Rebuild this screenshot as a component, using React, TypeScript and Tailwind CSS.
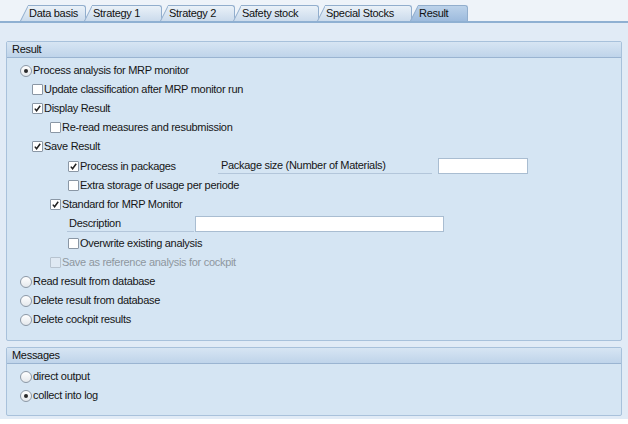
import React from 'react';

interface TabItem {
  label: string;
  body: string;
  active?: boolean;
}

const tabs: TabItem[] = [
  { label: 'Data basis', body: 'w-[58px]' },
  { label: 'Strategy 1', body: 'w-[70px]' },
  { label: 'Strategy 2', body: 'w-[67px]' },
  { label: 'Safety stock', body: 'w-[78px]' },
  { label: 'Special Stocks', body: 'w-[87px]' },
  { label: 'Result', body: 'w-[50px]', active: true },
];

const Tab: React.FC<TabItem> = ({ label, body, active }) => {
  const grad = active ? 'tabOn' : 'tabOff';
  return (
    <div className="flex h-[16px] items-end -ml-[2px] first:ml-0">
      <svg width="9" height="16" viewBox="0 0 9 16" className="shrink-0 -mr-px">
        <path d="M0 16 L8 0.5 L9 0.5 L9 16 Z" fill={`url(#${grad})`} />
        <path d="M0.5 16 L8.3 0.5" stroke="#92aecd" strokeWidth="1" fill="none" />
      </svg>
      <div
        className={`${body} h-[16px] border-t border-r border-[#92aecd] rounded-tr-[3px] pl-[1px] leading-[15px] text-[#111] ${
          active ? 'bg-gradient-to-b from-[#bcd2ea] to-[#9dbbdd]' : 'bg-gradient-to-b from-[#eaf1f8] to-[#cbdbec]'
        }`}
      >
        {label}
      </div>
    </div>
  );
};

const Check: React.FC<{ checked?: boolean; disabled?: boolean }> = ({ checked, disabled }) => (
  <span
    className={`w-[11px] h-[11px] shrink-0 rounded-[1px] border flex items-center justify-center ${
      disabled ? 'border-[#b7c3cf] bg-[#dfe9f3]' : 'border-[#8a97a5] bg-white'
    }`}
  >
    {checked && (
      <svg width="9" height="9" viewBox="0 0 9 9">
        <path d="M1.8 4.6 L3.6 6.8 L7.2 1.8" stroke="#222" strokeWidth="1.5" fill="none" />
      </svg>
    )}
  </span>
);

const Radio: React.FC<{ checked?: boolean }> = ({ checked }) => (
  <span className="w-[12px] h-[12px] shrink-0 rounded-full border border-[#8c98a5] bg-gradient-to-b from-white to-[#e4e8ec] flex items-center justify-center">
    {checked && <span className="w-[4px] h-[4px] rounded-full bg-[#2a2a2a]" />}
  </span>
);

const Row: React.FC<{ pad: string; children: React.ReactNode; tall?: boolean }> = ({ pad, children, tall }) => (
  <div className={`flex items-center gap-[1px] ${tall ? 'h-[20px]' : 'h-[19px]'} ${pad}`}>{children}</div>
);

const Group: React.FC<{ title: string; children: React.ReactNode; className?: string }> = ({ title, children, className }) => (
  <div className={`rounded-[2px] border border-[#a8c1db] bg-[#d5e5f3] ${className ?? ''}`}>
    <div className="h-[16px] border-b border-[#9ab4d1] bg-gradient-to-b from-[#d7e5f3] to-[#bfd4ea] pl-[5px] leading-[15px] text-[#111]">
      {title}
    </div>
    {children}
  </div>
);

export default function App() {
  return (
    <div className="w-[628px] h-[424px] overflow-hidden bg-white font-['Liberation_Sans',Arial,sans-serif] text-[11px] tracking-[-0.3px] text-[#161616]">
      {/* Tabstrip */}
      <svg width="0" height="0" className="absolute">
        <defs>
          <linearGradient id="tabOff" x1="0" y1="0" x2="0" y2="1">
            <stop offset="0" stopColor="#eaf1f8" />
            <stop offset="1" stopColor="#cbdbec" />
          </linearGradient>
          <linearGradient id="tabOn" x1="0" y1="0" x2="0" y2="1">
            <stop offset="0" stopColor="#bcd2ea" />
            <stop offset="1" stopColor="#9dbbdd" />
          </linearGradient>
        </defs>
      </svg>
      <div className="h-[21px] bg-[#eef3f9] flex items-end pl-[20px]">
        {tabs.map((t) => (
          <Tab key={t.label} {...t} />
        ))}
      </div>
      <div className="h-[2px] bg-[#8fb0d2]" />

      <div className="h-[396px] bg-[#e1ebf6] px-[6px] pt-[18px] flex flex-col gap-[6px]">
        <Group title="Result" className="pb-[11px]">
          <div className="pt-[3px]">
            <Row pad="pl-[13px]">
              <Radio checked />
              <span>Process analysis for MRP monitor</span>
            </Row>
            <Row pad="pl-[25px]">
              <Check />
              <span>Update classification after MRP monitor run</span>
            </Row>
            <Row pad="pl-[25px]">
              <Check checked />
              <span>Display Result</span>
            </Row>
            <Row pad="pl-[43px]">
              <Check />
              <span>Re-read measures and resubmission</span>
            </Row>
            <Row pad="pl-[25px]">
              <Check checked />
              <span>Save Result</span>
            </Row>
            <Row pad="pl-[61px]" tall>
              <Check checked />
              <span className="w-[137px]">Process in packages</span>
              <span className="w-[214px] h-[16px] border-b border-[#b3c6da] pl-[3px] leading-[15px]">
                Package size (Number of Materials)
              </span>
              <span className="ml-[5px] w-[90px] h-[16px] border border-[#a9bdd1] bg-white" />
            </Row>
            <Row pad="pl-[61px]">
              <Check />
              <span>Extra storage of usage per periode</span>
            </Row>
            <Row pad="pl-[43px]">
              <Check checked />
              <span>Standard for MRP Monitor</span>
            </Row>
            <Row pad="pl-[60px]" tall>
              <span className="w-[127px] h-[16px] border-b border-[#b3c6da] pl-[2px] leading-[15px]">Description</span>
              <span className="w-[249px] h-[16px] border border-[#a9bdd1] bg-white" />
            </Row>
            <Row pad="pl-[61px]">
              <Check />
              <span>Overwrite existing analysis</span>
            </Row>
            <Row pad="pl-[43px]">
              <Check disabled />
              <span className="text-[#8e979f]">Save as reference analysis for cockpit</span>
            </Row>
            <Row pad="pl-[13px]">
              <Radio />
              <span>Read result from database</span>
            </Row>
            <Row pad="pl-[13px]">
              <Radio />
              <span>Delete result from database</span>
            </Row>
            <Row pad="pl-[13px]">
              <Radio />
              <span>Delete cockpit results</span>
            </Row>
          </div>
        </Group>

        <Group title="Messages" className="pb-[10px]">
          <div className="pt-[3px]">
            <Row pad="pl-[13px]">
              <Radio />
              <span>direct output</span>
            </Row>
            <Row pad="pl-[13px]">
              <Radio checked />
              <span>collect into log</span>
            </Row>
          </div>
        </Group>
      </div>
    </div>
  );
}
